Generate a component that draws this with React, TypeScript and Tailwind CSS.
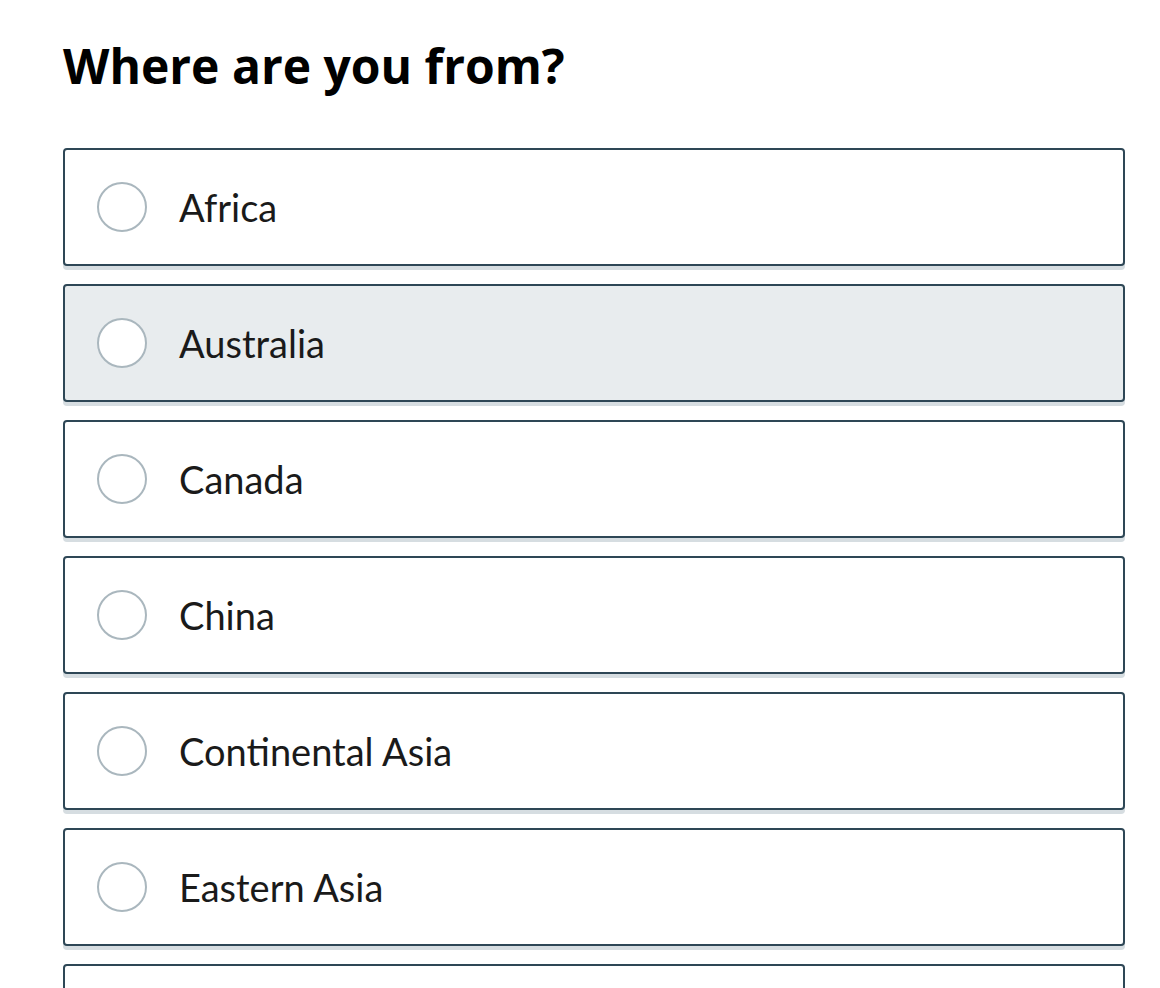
const options = ['Africa', 'Australia', 'Canada', 'China', 'Continental Asia', 'Eastern Asia', 'Europe'];

export default function App() {
  return (
    <div className="min-h-screen bg-white pl-[63px] pr-[35px] pt-[36px] overflow-hidden h-[988px]">
      <h1 className="text-[48px] leading-[60px] font-bold text-black font-['Open_Sans',sans-serif]">
        Where are you from?
      </h1>
      <div className="mt-[52px] flex flex-col gap-[18px]">
        {options.map((o, i) => (
          <label
            key={o}
            className={`flex items-center h-[118px] rounded-[4px] border-2 border-[#2e4756] shadow-[0_4px_0_#d6dde1] pl-[32px] ${
              i === 1 ? 'bg-[#e8ecee]' : 'bg-white'
            }`}
          >
            <span className="w-[50px] h-[50px] rounded-full border-2 border-[#aab7be] bg-white shrink-0" />
            <span className="ml-[32px] text-[38px] text-[#1a1a1a] font-['Lato',sans-serif]">{o}</span>
          </label>
        ))}
      </div>
    </div>
  );
}
